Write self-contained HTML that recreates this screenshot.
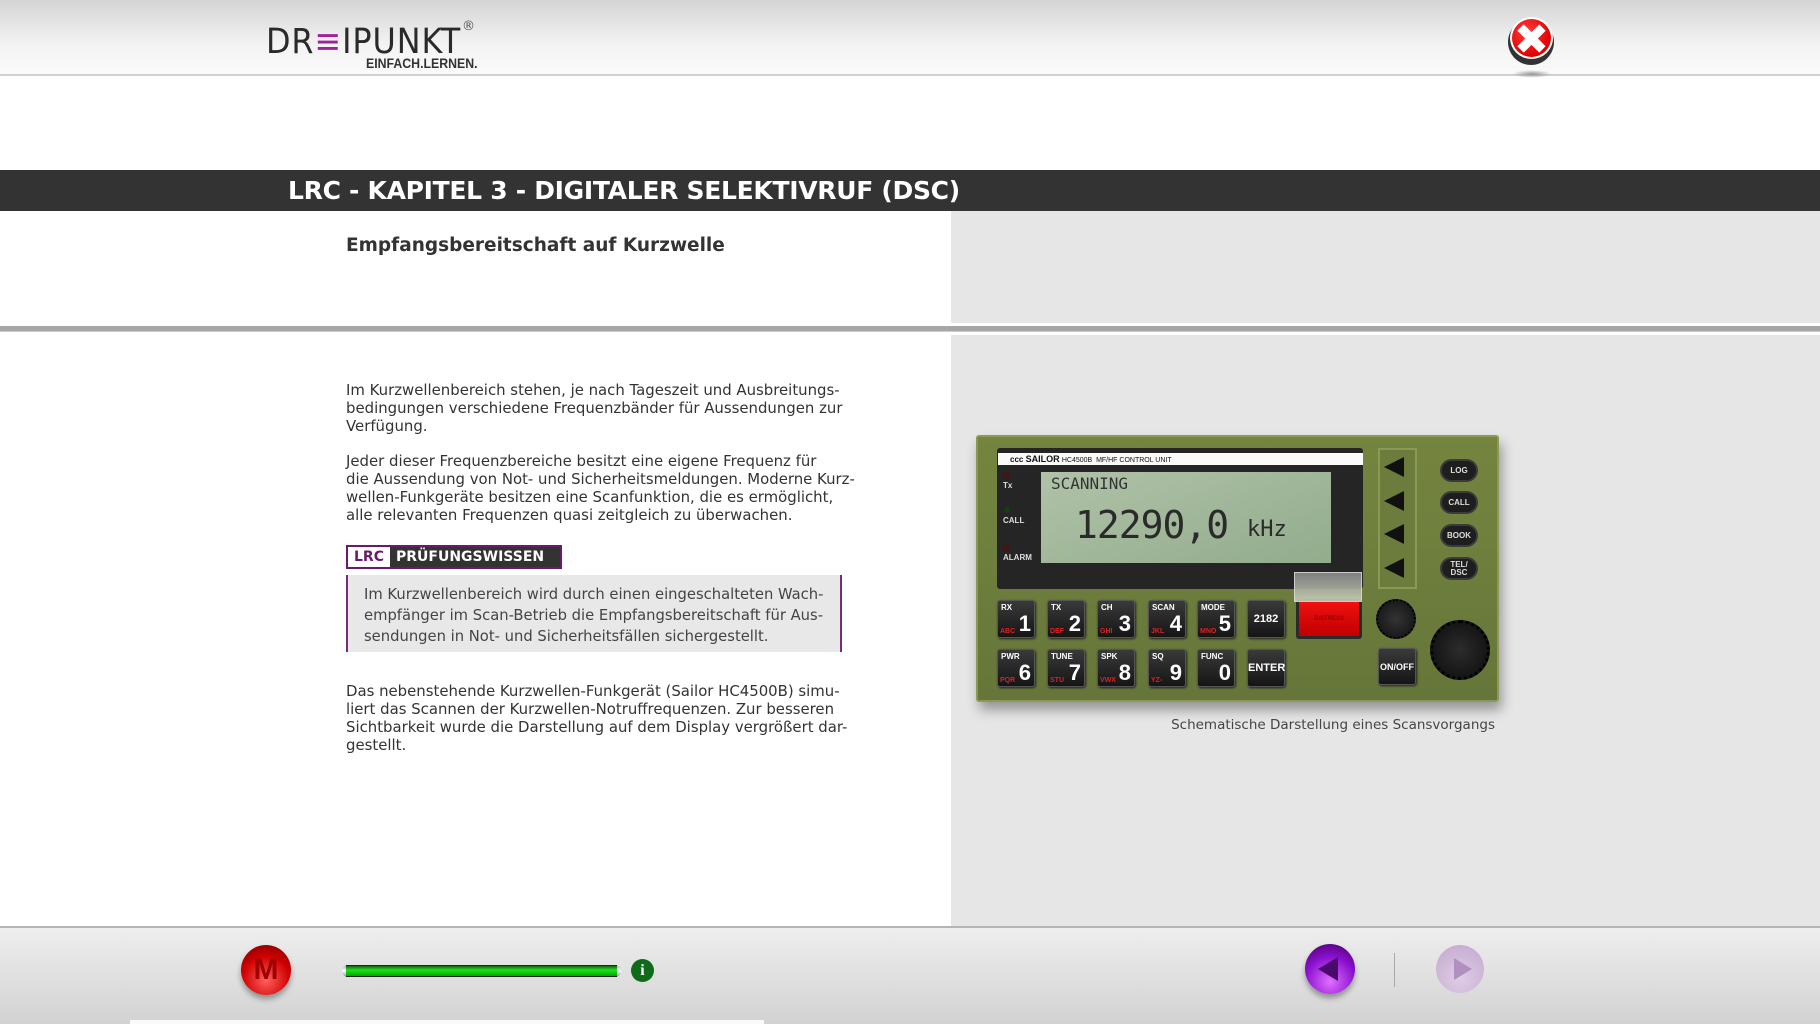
<!DOCTYPE html>
<html><head><meta charset="utf-8">
<style>
*{margin:0;padding:0;box-sizing:border-box}
body{width:1820px;height:1024px;position:relative;overflow:hidden;background:#fff;font-family:"DejaVu Sans","Liberation Sans",sans-serif;color:#333}
.a{position:absolute}
.hdr{left:0;top:0;width:1820px;height:76px;background:linear-gradient(#d4d4d4,#f3f3f3 60%,#fafafa);border-bottom:2px solid #d0d0d0}
.title{left:0;top:170px;width:1820px;height:41px;background:#333;color:#fff;font:bold 25px "DejaVu Sans",sans-serif;padding-left:288px;line-height:41px;letter-spacing:-0.3px}
.p{font-size:14.9px;line-height:18px;color:#333;white-space:nowrap}
.key{width:38px;height:38px;background:linear-gradient(#3a3a3a,#151515);border:1px solid #555;border-radius:3px;box-shadow:1px 1px 2px #222;color:#fff;font-family:"Liberation Sans",sans-serif}
.key .t{position:absolute;left:3px;top:2px;font-size:8px;font-weight:bold}
.key .n{position:absolute;right:3px;bottom:0;font-size:22px;font-weight:bold}
.key .r{position:absolute;left:2px;bottom:2px;font-size:7px;color:#d22;font-weight:bold}
.rb{width:38px;height:23px;border-radius:12px;background:#1e1e1e;border:2px solid #3b3b3b;color:#ddd;font:bold 8px "Liberation Sans",sans-serif;text-align:center;line-height:19px}
.tri{width:0;height:0;border-top:10px solid transparent;border-bottom:10px solid transparent;border-right:20px solid #111}
</style></head><body>
<div class="a hdr"></div>
<div class="a" style="left:266px;top:22px;font:500 35px 'DejaVu Sans',sans-serif;color:#2a2a2a;letter-spacing:1px;transform:scaleX(0.91);transform-origin:left">DR<span style="color:#a020a0">&#8801;</span>IPUNKT</div>
<div class="a" style="left:462px;top:19px;font-size:13px;color:#555">®</div>
<div class="a" style="left:366px;top:55px;font:bold 14px 'Liberation Sans',sans-serif;color:#333;transform:scaleX(0.88);transform-origin:left">EINFACH.LERNEN.</div>
<div class="a" style="left:1512px;top:70px;width:40px;height:8px;border-radius:50%;background:radial-gradient(#999,transparent 70%)"></div>
<div class="a" style="left:1508px;top:19px;width:46px;height:46px;border-radius:50%;background:#333"></div>
<div class="a" style="left:1510px;top:17px;width:43px;height:42px;border-radius:50%;background:radial-gradient(circle at 40% 35%,#ff4040,#e00000 70%);border:2px solid #fff"></div>
<div class="a" style="left:1516px;top:34px;width:31px;height:9px;background:#fff;transform:rotate(45deg)"></div>
<div class="a" style="left:1516px;top:34px;width:31px;height:9px;background:#fff;transform:rotate(-45deg)"></div>

<div class="a title">LRC - KAPITEL 3 - DIGITALER SELEKTIVRUF (DSC)</div>
<div class="a" style="left:346px;top:235px;font:bold 18.5px 'DejaVu Sans',sans-serif;color:#333">Empfangsbereitschaft auf Kurzwelle</div>
<div class="a" style="left:951px;top:211px;width:869px;height:112px;background:#e6e6e6"></div>
<div class="a" style="left:0;top:326px;width:1820px;height:6px;background:#a6a6a6;border-bottom:1px solid #ccc"></div>
<div class="a" style="left:951px;top:335px;width:869px;height:591px;background:#e6e6e6"></div>

<div class="a p" style="left:346px;top:381px">Im Kurzwellenbereich stehen, je nach Tageszeit und Ausbreitungs-<br>bedingungen verschiedene Frequenzbänder für Aussendungen zur<br>Verfügung.</div>
<div class="a p" style="left:346px;top:452px">Jeder dieser Frequenzbereiche besitzt eine eigene Frequenz für<br>die Aussendung von Not- und Sicherheitsmeldungen. Moderne Kurz-<br>wellen-Funkgeräte besitzen eine Scanfunktion, die es ermöglicht,<br>alle relevanten Frequenzen quasi zeitgleich zu überwachen.</div>
<div class="a" style="left:346px;top:545px;width:216px;height:24px;background:#333;border:2px solid #6a1a6a"></div>
<div class="a" style="left:348px;top:547px;width:42px;height:20px;background:#fff;color:#6a1a6a;font:bold 14px 'DejaVu Sans',sans-serif;text-align:center;line-height:20px">LRC</div>
<div class="a" style="left:396px;top:547px;color:#fff;font:bold 14px 'DejaVu Sans',sans-serif;line-height:20px">PRÜFUNGSWISSEN</div>
<div class="a" style="left:346px;top:575px;width:496px;height:77px;background:#e8e8e8;border-left:2px solid #7a2a7a;border-right:2px solid #7a2a7a"></div>
<div class="a p" style="left:364px;top:584px;font-size:14.75px;line-height:21px;color:#444">Im Kurzwellenbereich wird durch einen eingeschalteten Wach-<br>empfänger im Scan-Betrieb die Empfangsbereitschaft für Aus-<br>sendungen in Not- und Sicherheitsfällen sichergestellt.</div>
<div class="a p" style="left:346px;top:682px">Das nebenstehende Kurzwellen-Funkgerät (Sailor HC4500B) simu-<br>liert das Scannen der Kurzwellen-Notruffrequenzen. Zur besseren<br>Sichtbarkeit wurde die Darstellung auf dem Display vergrößert dar-<br>gestellt.</div>

<!-- radio -->
<div class="a" style="left:976px;top:435px;width:523px;height:267px;background:linear-gradient(#75853f,#66763a);border:2px solid #8a9a55;border-radius:3px;box-shadow:3px 8px 12px rgba(0,0,0,0.35)"></div>
<div class="a" style="left:997px;top:448px;width:366px;height:141px;background:#252525;border-radius:3px"></div>
<div class="a" style="left:998px;top:453px;width:365px;height:12px;background:#fafafa;font:bold 8px 'Liberation Sans',sans-serif;color:#111;line-height:12px;padding-left:12px">ccc <b style="font-size:9px">SAILOR</b> <span style="font-weight:normal;font-size:7px">HC4500B &nbsp;MF/HF CONTROL UNIT</span></div>
<div class="a" style="left:1004px;top:472px;width:6px;height:6px;border-radius:50%;background:#501010"></div>
<div class="a" style="left:1004px;top:507px;width:6px;height:6px;border-radius:50%;background:#104010"></div>
<div class="a" style="left:1004px;top:545px;width:6px;height:6px;border-radius:50%;background:#501010"></div>
<div class="a" style="left:1003px;top:481px;font:bold 8px 'Liberation Sans',sans-serif;color:#ddd">Tx</div>
<div class="a" style="left:1003px;top:516px;font:bold 8px 'Liberation Sans',sans-serif;color:#ddd">CALL</div>
<div class="a" style="left:1003px;top:553px;font:bold 8px 'Liberation Sans',sans-serif;color:#ddd">ALARM</div>
<div class="a" style="left:1041px;top:472px;width:290px;height:91px;background:linear-gradient(160deg,#b0c2a8,#92ac8c)"></div>
<div class="a" style="left:1051px;top:474px;font:16px 'DejaVu Sans Mono',monospace;color:#333">SCANNING</div>
<div class="a" style="left:1075px;top:503px;font:38px 'DejaVu Sans Mono',monospace;color:#2a2a2a;letter-spacing:-1px">12290,0</div>
<div class="a" style="left:1247px;top:517px;font:22px 'DejaVu Sans Mono',monospace;color:#2a2a2a">kHz</div>
<div class="a" style="left:1378px;top:448px;width:39px;height:141px;border:2px solid #8a9a55;background:#6c7c3c"></div>
<div class="a tri" style="left:1384px;top:457px"></div>
<div class="a tri" style="left:1384px;top:491px"></div>
<div class="a tri" style="left:1384px;top:524px"></div>
<div class="a tri" style="left:1384px;top:558px"></div>
<div class="a rb" style="left:1440px;top:459px">LOG</div>
<div class="a rb" style="left:1440px;top:491px">CALL</div>
<div class="a rb" style="left:1440px;top:524px">BOOK</div>
<div class="a rb" style="left:1440px;top:557px;line-height:8px;padding-top:2px">TEL/<br>DSC</div>

<div class="a key" style="left:997px;top:600px"><span class="t">RX</span><span class="n">1</span><span class="r">ABC</span></div>
<div class="a key" style="left:1047px;top:600px"><span class="t">TX</span><span class="n">2</span><span class="r">DEF</span></div>
<div class="a key" style="left:1097px;top:600px"><span class="t">CH</span><span class="n">3</span><span class="r">GHI</span></div>
<div class="a key" style="left:1148px;top:600px"><span class="t">SCAN</span><span class="n">4</span><span class="r">JKL</span></div>
<div class="a key" style="left:1197px;top:600px"><span class="t">MODE</span><span class="n">5</span><span class="r">MNO</span></div>
<div class="a key" style="left:1247px;top:600px;text-align:center;line-height:36px;font-size:11px;font-weight:bold">2182</div>
<div class="a key" style="left:997px;top:649px"><span class="t">PWR</span><span class="n">6</span><span class="r">PQR</span></div>
<div class="a key" style="left:1047px;top:649px"><span class="t">TUNE</span><span class="n">7</span><span class="r">STU</span></div>
<div class="a key" style="left:1097px;top:649px"><span class="t">SPK</span><span class="n">8</span><span class="r">VWX</span></div>
<div class="a key" style="left:1148px;top:649px"><span class="t">SQ</span><span class="n">9</span><span class="r">YZ-</span></div>
<div class="a key" style="left:1197px;top:649px"><span class="t">FUNC</span><span class="n">0</span></div>
<div class="a key" style="left:1247px;top:649px;text-align:center;line-height:36px;font-size:11px;font-weight:bold">ENTER</div>
<div class="a" style="left:1296px;top:599px;width:66px;height:40px;background:#2a2a2a;border-radius:3px"></div>
<div class="a" style="left:1299px;top:602px;width:60px;height:34px;background:linear-gradient(#f01010,#c00000);color:#900;font:bold 6px 'Liberation Sans',sans-serif;text-align:center;line-height:34px">DISTRESS</div>
<div class="a" style="left:1294px;top:572px;width:68px;height:30px;background:linear-gradient(#8a8a8a,#c8ceb8);border:1px solid #ddd;opacity:.9"></div>
<div class="a" style="left:1376px;top:599px;width:40px;height:40px;border-radius:50%;background:radial-gradient(#333,#111);border:2px dotted #000"></div>
<div class="a key" style="left:1378px;top:648px;width:38px;height:37px;text-align:center;line-height:36px;font-size:9px;font-weight:bold">ON/OFF</div>
<div class="a" style="left:1430px;top:620px;width:60px;height:60px;border-radius:50%;background:radial-gradient(#2c2c2c,#0c0c0c);border:3px dotted #000"></div>
<div class="a" style="left:1095px;top:717px;font-size:13.5px;color:#444;width:400px;text-align:right;white-space:nowrap">Schematische Darstellung eines Scansvorgangs</div>

<!-- footer -->
<div class="a" style="left:0;top:926px;width:1820px;height:98px;background:linear-gradient(#eeeeee,#d2d2d2);border-top:2px solid #b5b5b5"></div>
<div class="a" style="left:130px;top:1020px;width:634px;height:4px;background:#fafafa"></div>
<div class="a" style="left:241px;top:945px;width:50px;height:50px;border-radius:50%;background:radial-gradient(circle at 50% 70%,#ff6060,#d00000 55%,#700000);box-shadow:0 4px 6px rgba(0,0,0,.35);color:#a00000;font:bold 30px 'Liberation Sans',sans-serif;text-align:center;line-height:50px">M</div>
<div class="a" style="left:342px;top:965px;width:279px;height:12px;border-radius:6px;background:linear-gradient(#aaa,#fff,#888)"></div>
<div class="a" style="left:346px;top:965px;width:271px;height:12px;background:linear-gradient(#116611,#22dd22 40%,#00aa00);border-top:1px solid #222;border-bottom:1px solid #222"></div>
<div class="a" style="left:631px;top:959px;width:23px;height:23px;border-radius:50%;background:#0f6a1a;color:#fff;font:bold 16px 'Liberation Serif',serif;text-align:center;line-height:23px">i</div>
<div class="a" style="left:1305px;top:944px;width:50px;height:50px;border-radius:50%;background:radial-gradient(circle at 50% 75%,#e070ff,#8a10d0 55%,#40005a);box-shadow:0 4px 6px rgba(0,0,0,.35)"></div>
<div class="a" style="left:1318px;top:957px;width:0;height:0;border-top:12px solid transparent;border-bottom:12px solid transparent;border-right:20px solid #4a0a6a"></div>
<div class="a" style="left:1394px;top:953px;width:1px;height:34px;background:#aaa"></div>
<div class="a" style="left:1436px;top:945px;width:48px;height:48px;border-radius:50%;background:radial-gradient(circle at 50% 70%,#e0cce6,#c0a8cc);"></div>
<div class="a" style="left:1454px;top:958px;width:0;height:0;border-top:11px solid transparent;border-bottom:11px solid transparent;border-left:18px solid #b090c0"></div>
</body></html>
